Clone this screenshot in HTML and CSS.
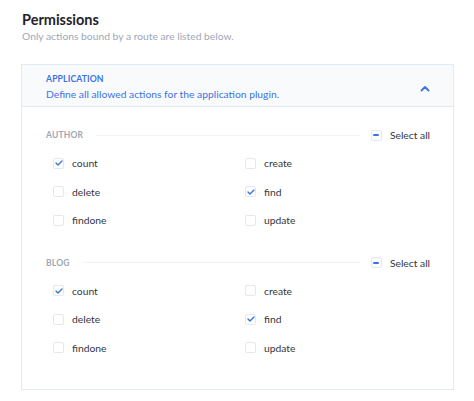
FILE: index.html
```html
<!DOCTYPE html>
<html>
<head>
<meta charset="utf-8">
<link rel="stylesheet" href="styles.css">
</head>
<body>
<div class="page">
  <h1 class="title">Permissions</h1>
  <p class="subtitle">Only actions bound by a route are listed below.</p>
  <div class="panel">
    <div class="panel-head">
      <div class="head-text">
        <div class="plugin">APPLICATION</div>
        <div class="desc">Define all allowed actions for the application plugin.</div>
      </div>
      <svg class="chev" width="10" height="7" viewBox="0 0 10 7"><path d="M1.5 5.5 L5 2 L8.5 5.5" fill="none" stroke="#3b73e5" stroke-width="1.8" stroke-linecap="round" stroke-linejoin="round"/></svg>
    </div>
    <div class="panel-body">
      <div class="group">
        <div class="group-head">
          <span class="group-name">AUTHOR</span>
          <span class="rule"></span>
          <span class="select-all"><span class="box minus"></span>Select all</span>
        </div>
        <div class="grid">
          <div class="item"><span class="box checked"><svg width="8" height="6" viewBox="0 0 8 6"><path d="M1 3 L3 5 L7 1" fill="none" stroke="#3b73e5" stroke-width="1.4" stroke-linecap="round" stroke-linejoin="round"/></svg></span>count</div>
          <div class="item"><span class="box"></span>create</div>
          <div class="item"><span class="box"></span>delete</div>
          <div class="item"><span class="box checked"><svg width="8" height="6" viewBox="0 0 8 6"><path d="M1 3 L3 5 L7 1" fill="none" stroke="#3b73e5" stroke-width="1.4" stroke-linecap="round" stroke-linejoin="round"/></svg></span>find</div>
          <div class="item"><span class="box"></span>findone</div>
          <div class="item"><span class="box"></span>update</div>
        </div>
      </div>
      <div class="group">
        <div class="group-head">
          <span class="group-name">BLOG</span>
          <span class="rule"></span>
          <span class="select-all"><span class="box minus"></span>Select all</span>
        </div>
        <div class="grid">
          <div class="item"><span class="box checked"><svg width="8" height="6" viewBox="0 0 8 6"><path d="M1 3 L3 5 L7 1" fill="none" stroke="#3b73e5" stroke-width="1.4" stroke-linecap="round" stroke-linejoin="round"/></svg></span>count</div>
          <div class="item"><span class="box"></span>create</div>
          <div class="item"><span class="box"></span>delete</div>
          <div class="item"><span class="box checked"><svg width="8" height="6" viewBox="0 0 8 6"><path d="M1 3 L3 5 L7 1" fill="none" stroke="#3b73e5" stroke-width="1.4" stroke-linecap="round" stroke-linejoin="round"/></svg></span>find</div>
          <div class="item"><span class="box"></span>findone</div>
          <div class="item"><span class="box"></span>update</div>
        </div>
      </div>
    </div>
  </div>
</div>
</body>
</html>
```
FILE: styles.css
```css
html, body {
  margin: 0;
  padding: 0;
  background: #ffffff;
}
body {
  font-family: Lato, "Open Sans", sans-serif;
  color: #333740;
}
.page {
  padding: 11px 20px 0 21px;
}
.title {
  margin: 0 0 0 1px;
  font-size: 14.5px;
  font-weight: 700;
  line-height: 18px;
  color: #1f2329;
}
.subtitle {
  margin: 0 0 0 1px;
  font-size: 10.3px;
  line-height: 14px;
  color: #9ea7b8;
}
.panel {
  margin-top: 21px;
  width: 431px;
  border: 1px solid #e3e9f3;
  height: 324px;
}
.panel-head {
  display: flex;
  align-items: center;
  justify-content: space-between;
  background: #f9fafc;
  border-bottom: 1px solid #e3e9f3;
  padding: 8px 23px 5px 24px;
  height: 28px;
}
.plugin {
  font-size: 8.7px;
  font-weight: 700;
  color: #3b73e5;
  line-height: 12px;
  letter-spacing: 0.1px;
}
.desc {
  font-size: 10.3px;
  color: #3b73e5;
  line-height: 14px;
  margin-top: 2px;
}
.chev {
  display: block;
  margin-top: 2px;
}
.panel-body {
  padding: 21px 23px 0 24px;
}
.group + .group {
  margin-top: 21px;
}
.group-head {
  display: flex;
  align-items: center;
  height: 14px;
}
.group-name {
  font-size: 8.5px;
  font-weight: 700;
  color: #a0a7b4;
  letter-spacing: 0.2px;
  margin-right: 13px;
}
.rule {
  flex: 1;
  height: 1px;
  background: #f2f3f6;
}
.select-all {
  display: flex;
  align-items: center;
  margin-left: 11px;
  font-size: 10.3px;
  color: #333740;
}
.box {
  display: inline-flex;
  align-items: center;
  justify-content: center;
  width: 9px;
  height: 9px;
  border: 1px solid #e3e9f3;
  border-radius: 2px;
  background: #fff;
  box-sizing: content-box;
  margin-right: 8px;
}
.box.minus::before {
  content: "";
  display: block;
  width: 6px;
  height: 2px;
  background: #3b73e5;
  border-radius: 1px;
}
.box.minus {
  background: #fbfcfe;
  margin-right: 8px;
}
.grid {
  display: grid;
  grid-template-columns: 192px 1fr;
  grid-auto-rows: 28.5px;
  margin-top: 7px;
  padding-left: 7px;
}
.item {
  display: flex;
  align-items: center;
  font-size: 10.3px;
  color: #333740;
  height: 28.5px;
}
```
